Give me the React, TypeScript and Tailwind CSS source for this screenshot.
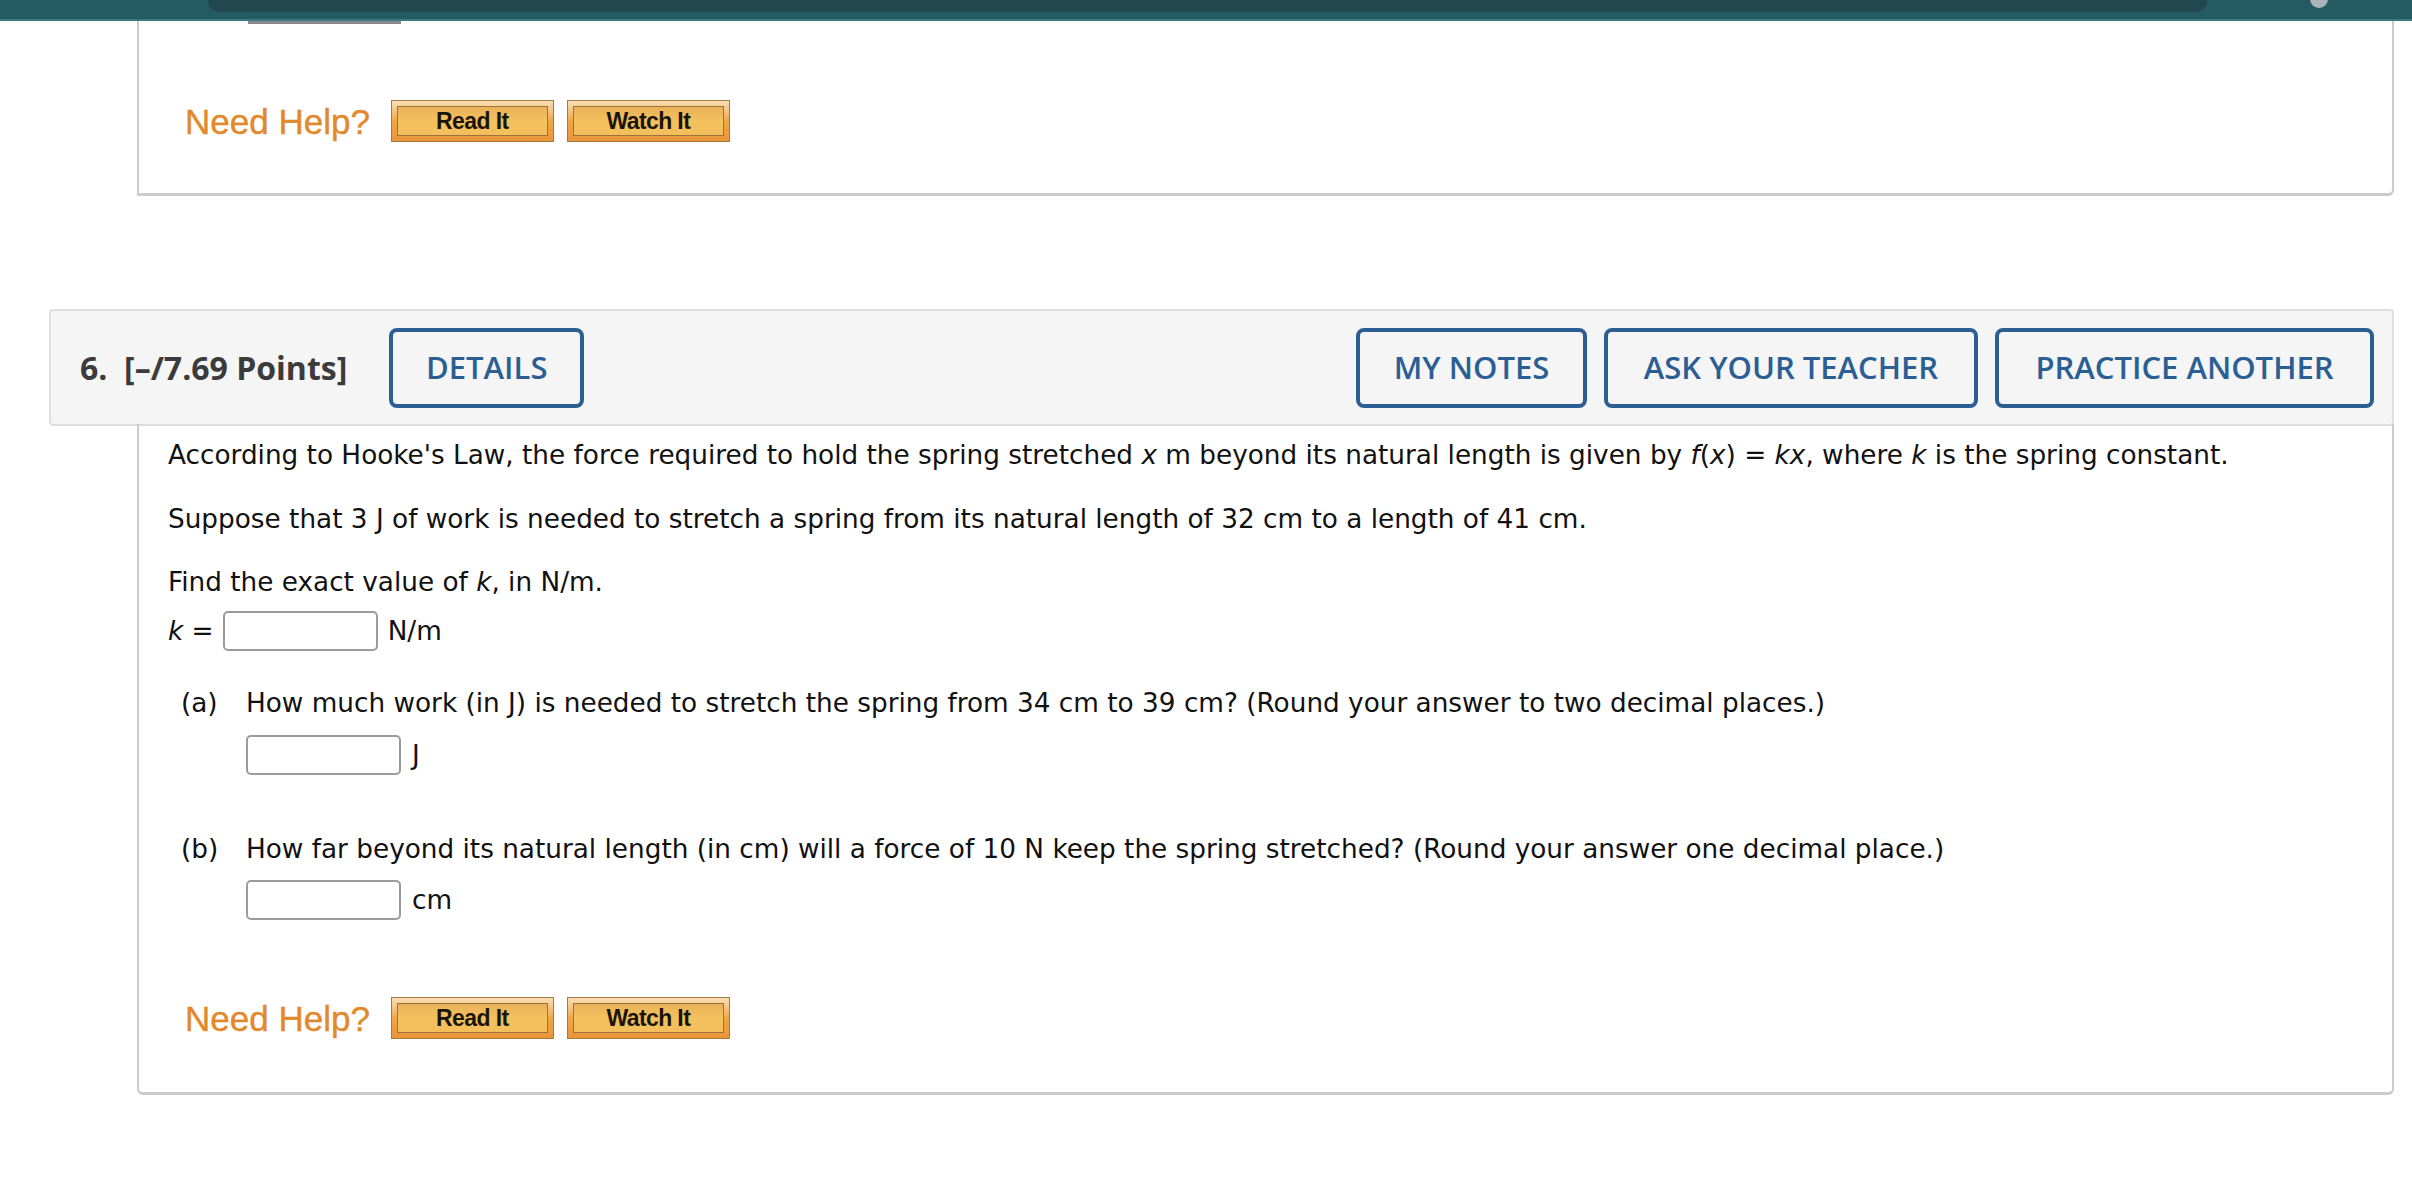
import React from 'react'

const body = '[font-family:"DejaVu_Sans",Verdana,sans-serif]'

function HelpButton({ label }: { label: string }) {
    return (
        <div className="w-[163px] h-[42px] border border-[#a8783f] bg-gradient-to-b from-[#f9dfb3] via-[#efa548] to-[#e9963a] p-[5px]">
            <div className="h-full border border-[#9d703e] bg-gradient-to-b from-[#e9b25a] via-[#f3c15e] to-[#f2bf5b] flex items-center justify-center">
                <span className='[font-family:"Liberation_Sans",Arial,sans-serif] text-[23px] font-bold text-[#1b1408] tracking-[-0.6px]'>{label}</span>
            </div>
        </div>
    )
}

function NeedHelp() {
    return (
        <div className="flex items-center">
            <span className='[font-family:"Liberation_Sans",Arial,sans-serif] text-[35px] text-[#e2892c] leading-none [-webkit-text-stroke:0.4px_#e2892c]'>Need Help?</span>
            <div className="ml-[21px] flex gap-[13px]">
                <HelpButton label="Read It" />
                <HelpButton label="Watch It" />
            </div>
        </div>
    )
}

function OutlineButton({ label, w }: { label: string; w: string }) {
    return (
        <div className={`${w} h-[80px] border-[4px] border-[#2b5f94] rounded-[8px] flex items-center justify-center text-[#2b5f94] text-[31px] font-semibold`}>
            {label}
        </div>
    )
}

function Box() {
    return <div className="w-[155px] h-[40px] border-2 border-[#9b9b9b] rounded-[5px] bg-white" />
}

export default function App() {
    return (
        <div className="w-[2412px] h-[1194px] bg-white overflow-hidden relative">
            {/* sticky top bar */}
            <div className="h-[21px] bg-[#245b63] border-b-[2px] border-[#3d7981] px-[205px] relative">
                <div className="ml-[3px] h-[12px] bg-[#22474f] rounded-b-[16px]" />
                <div className="absolute right-[84px] -top-[10px] w-[18px] h-[18px] rounded-full bg-[#a9b3b8]" />
            </div>

            {/* previous question, bottom part */}
            <div className="ml-[137px] w-[2257px] h-[175px] border-l-2 border-r-2 border-b-[3px] border-[#cbcbcb] rounded-br-[6px]">
                <div className="ml-[109px] w-[153px] h-[3px] bg-[#8a8a8a]" />
                <div className="mt-[76px] ml-[46px]">
                    <NeedHelp />
                </div>
            </div>

            {/* question 6 header */}
            <div className='mt-[113px] ml-[49px] w-[2345px] h-[117px] bg-[#f5f5f5] border-2 border-[#dedede] rounded-[4px] flex items-center pl-[29px] pr-[18px] [font-family:"Open_Sans",sans-serif]'>
                <span className="text-[32px] font-bold text-[#3b3b3b] whitespace-pre">6.  [–/7.69 Points]</span>
                <div className="ml-[42px]">
                    <OutlineButton label="DETAILS" w="w-[195px]" />
                </div>
                <div className="flex-1" />
                <div className="flex gap-[17px]">
                    <OutlineButton label="MY NOTES" w="w-[231px]" />
                    <OutlineButton label="ASK YOUR TEACHER" w="w-[374px]" />
                    <OutlineButton label="PRACTICE ANOTHER" w="w-[379px]" />
                </div>
            </div>

            {/* question 6 body */}
            <div className={`ml-[137px] w-[2257px] h-[671px] -mt-[2px] border-l-2 border-r-2 border-b-[3px] border-[#cbcbcb] rounded-b-[6px] pl-[29px] pt-[13px] ${body} text-[26.3px] leading-[36px] text-[#111]`}>
                <p>
                    According to Hooke's Law, the force required to hold the spring stretched <i>x</i> m beyond its natural length is given by <i>f</i>(<i>x</i>) = <i>kx</i>, where <i>k</i> is the spring constant.
                </p>
                <p className="mt-[28px]">Suppose that 3 J of work is needed to stretch a spring from its natural length of 32 cm to a length of 41 cm.</p>
                <p className="mt-[27px]">
                    Find the exact value of <i>k</i>, in N/m.
                </p>
                <div className="mt-[11px] flex items-center">
                    <span>
                        <i>k</i> =
                    </span>
                    <div className="ml-[9px]">
                        <Box />
                    </div>
                    <span className="ml-[10px]">N/m</span>
                </div>

                <div className="mt-[34px] ml-[13px] flex">
                    <span className="w-[65px]">(a)</span>
                    <span>How much work (in J) is needed to stretch the spring from 34 cm to 39 cm? (Round your answer to two decimal places.)</span>
                </div>
                <div className="mt-[14px] ml-[78px] flex items-center">
                    <Box />
                    <span className="ml-[11px]">J</span>
                </div>

                <div className="mt-[56px] ml-[13px] flex">
                    <span className="w-[65px]">(b)</span>
                    <span>How far beyond its natural length (in cm) will a force of 10 N keep the spring stretched? (Round your answer one decimal place.)</span>
                </div>
                <div className="mt-[13px] ml-[78px] flex items-center">
                    <Box />
                    <span className="ml-[11px]">cm</span>
                </div>

                <div className="mt-[77px] ml-[17px]">
                    <NeedHelp />
                </div>
            </div>
        </div>
    )
}
